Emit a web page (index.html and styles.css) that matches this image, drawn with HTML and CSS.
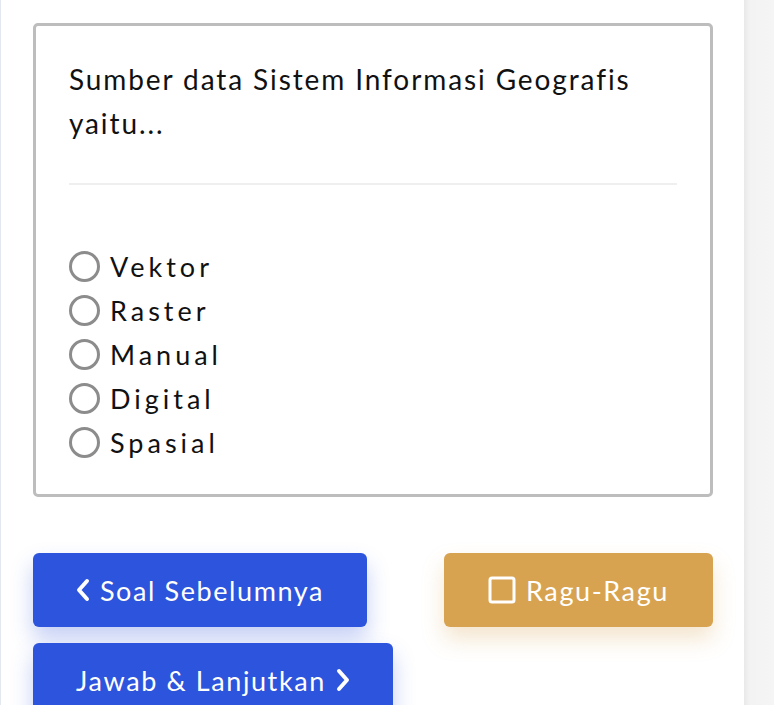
FILE: index.html
```html
<!DOCTYPE html>
<html>
<head>
<meta charset="utf-8">
<link rel="stylesheet" href="styles.css">
</head>
<body>
<div class="layout">
  <main class="page">
    <section class="card">
      <p class="question">Sumber data Sistem Informasi Geografis yaitu...</p>
      <hr class="divider">
      <ul class="options">
        <li class="option"><span class="radio"></span><span class="label">Vektor</span></li>
        <li class="option"><span class="radio"></span><span class="label">Raster</span></li>
        <li class="option"><span class="radio"></span><span class="label">Manual</span></li>
        <li class="option"><span class="radio"></span><span class="label">Digital</span></li>
        <li class="option"><span class="radio"></span><span class="label">Spasial</span></li>
      </ul>
    </section>
    <div class="actions">
      <div class="action-row">
        <button class="btn btn-blue btn-prev">
          <svg class="chev" viewBox="0 0 14 24" width="14" height="24"><path d="M11 3 L3 12 L11 21" fill="none" stroke="#fff" stroke-width="4" stroke-linecap="round" stroke-linejoin="round"/></svg>
          <span>Soal Sebelumnya</span>
        </button>
        <button class="btn btn-orange btn-doubt">
          <svg class="sq" viewBox="0 0 28 28" width="28" height="28"><rect x="2" y="2" width="24" height="24" rx="2" fill="none" stroke="#fff" stroke-width="3"/></svg>
          <span>Ragu-Ragu</span>
        </button>
      </div>
      <div class="action-row">
        <button class="btn btn-blue btn-next">
          <span>Jawab &amp; Lanjutkan</span>
          <svg class="chev" viewBox="0 0 14 24" width="14" height="24"><path d="M3 3 L11 12 L3 21" fill="none" stroke="#fff" stroke-width="4" stroke-linecap="round" stroke-linejoin="round"/></svg>
        </button>
      </div>
    </div>
  </main>
  <aside class="side"></aside>
</div>
</body>
</html>
```
FILE: styles.css
```css
html, body {
  margin: 0;
  padding: 0;
  background: #ffffff;
  font-family: "Lato", "Noto Sans", sans-serif;
  color: #111;
}
.layout {
  display: flex;
  height: 705px;
  overflow: hidden;
}
.page {
  width: 744px;
  border-left: 1px solid #e3e7ee;
  padding: 23px 0 0 32px;
  box-sizing: border-box;
}
.side {
  flex: 1;
  background: linear-gradient(to right, #e9e9e9, #f3f3f3 6px, #f5f5f5);
}
.card {
  width: 680px;
  box-sizing: border-box;
  border: 3px solid #bdbdbd;
  border-radius: 5px;
  padding: 31px 33px 30px 33px;
}
.question {
  margin: 0;
  font-size: 28px;
  line-height: 44px;
  letter-spacing: 1.9px;
  color: #111;
}
.divider {
  border: 0;
  border-top: 2px solid #efefef;
  margin: 38px 0 59px 0;
}
.options {
  list-style: none;
  margin: 0;
  padding: 0;
}
.option {
  display: flex;
  align-items: center;
  height: 44px;
}
.radio {
  width: 25px;
  height: 25px;
  border: 3px solid #8c8c8c;
  border-radius: 50%;
  margin-left: 0;
  margin-right: 10px;
  flex: none;
}
.label {
  font-size: 27px;
  letter-spacing: 4px;
  color: #111;
}
.actions {
  margin-top: 56px;
  display: flex;
  flex-direction: column;
  gap: 16px;
}
.action-row {
  display: flex;
  justify-content: space-between;
  width: 680px;
}
.btn {
  height: 74px;
  border: 0;
  border-radius: 6px;
  color: #fff;
  font-family: "Lato", "Noto Sans", sans-serif;
  font-size: 27px;
  letter-spacing: 1.6px;
  display: flex;
  align-items: center;
  justify-content: center;
  gap: 10px;
  padding: 0;
}
.btn-blue {
  background: #2c54dc;
  box-shadow: 0 12px 22px rgba(44, 84, 220, 0.28);
}
.btn-orange {
  background: #d8a350;
  box-shadow: 0 12px 22px rgba(216, 163, 80, 0.28);
}
.btn-prev { width: 334px; }
.btn-doubt { width: 269px; }
.btn-next { width: 360px; }
.chev { flex: none; }
.sq { flex: none; }
```
